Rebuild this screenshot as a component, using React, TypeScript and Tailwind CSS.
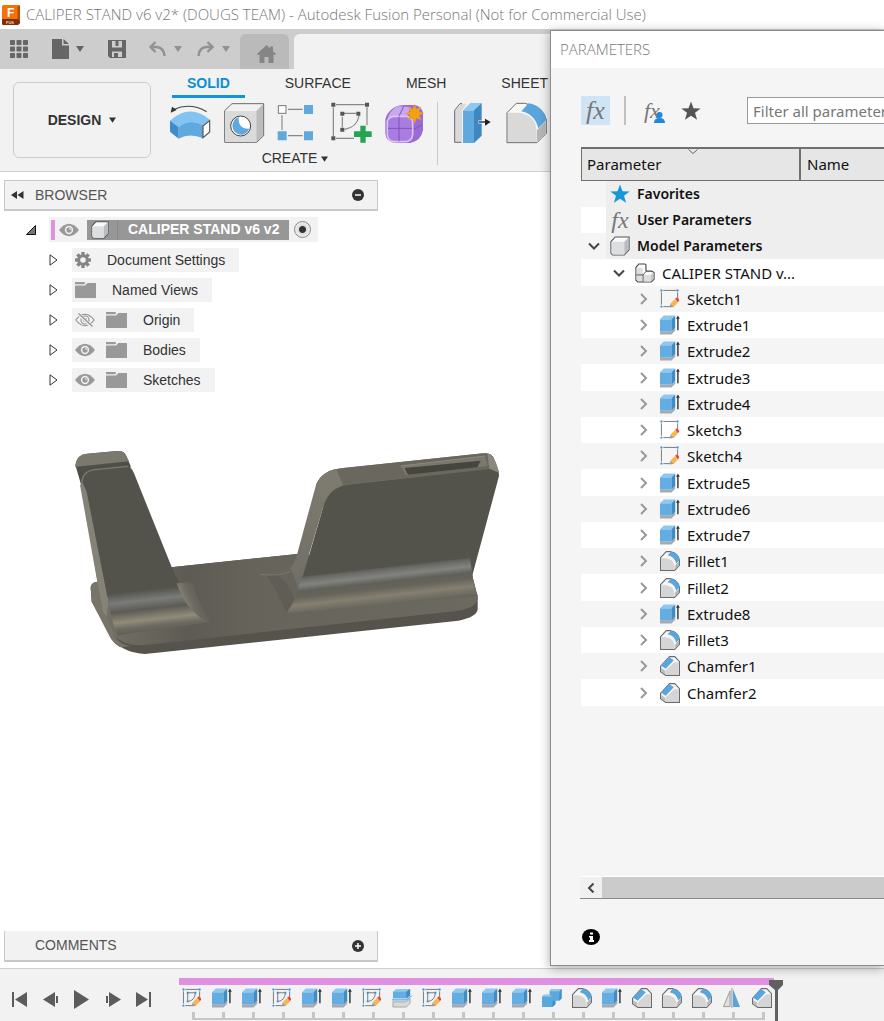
import React, { useState } from "react"
import clsx from "clsx"

type IconProps = { className?: string }

/* ---------- feature icons, shared by the tree and the timeline ---------- */

function Pencil() {
  return (
    <g transform="translate(-3 -3) scale(1.15)">
      <path d="M11.5 19.5l.8-3.6 3.2 2.9z" fill="#9a9a9a" />
      <path d="M12.3 15.6l3.9-3.7 2.9 2.9-3.7 4z" fill="#f6b84a" />
      <path d="M16.4 11.6l1.3-1.2q2.4.6 2.5 2.8l-1.2 1.4z" fill="#e8433f" />
    </g>
  )
}

function SketchIcon({ className, detailed }: IconProps & { detailed?: boolean }) {
  return (
    <svg viewBox="0 0 21 21" className={className} aria-hidden="true">
      <g fill="none" stroke="#777" strokeWidth="1">
        <path d="M3.5 1.5h14M1.5 3.5v13M3.5 18.5h7M18.5 3.5v6" />
        {detailed && <path d="M6 5v9M6 5h8M14 6q-1 7-7 8" />}
      </g>
      <g fill="#2d8fd5">
        <path d="M.5.5h2v2h-2zM17.5.5h2v2h-2zM.5 17.5h2v2h-2z" />
        {detailed && <path d="M5 4h2v2H5zM13 4h2v2h-2zM5 13h2v2H5z" />}
      </g>
      <Pencil />
    </svg>
  )
}

function ExtrudeIcon({ className }: IconProps) {
  return (
    <svg viewBox="0 0 21 21" className={className} aria-hidden="true">
      <path d="M0 17.500h12l4-4v3l-4 4H0z" fill="#a9a9a9" />
      <path d="M0 4.500h12V17.500H0z" fill="#63ade2" />
      <path d="M0 4.500L4 .5H16l-4 4z" fill="#8dc8f2" />
      <path d="M12 4.500L16 .5v13l-4 4z" fill="#3f8dc6" />
      <path d="M18.800 2v14" stroke="#333" strokeWidth="1.500" />
      <path d="M16.800 4l2-3.500 2 3.500z" fill="#333" />
    </svg>
  )
}

function FilletIcon({ className }: IconProps) {
  return (
    <svg viewBox="0 0 21 21" className={className} aria-hidden="true">
      <path d="M.6 7l6-6.400h4q9 2 9.800 9.400v5l-5 5.400H.6z" fill="#f6f6f6" stroke="#6b6b6b" strokeWidth="1.200" />
      <path d="M1.200 7.500h5.300q8 1 9 9v3.300H1.200z" fill="#d5d5d5" />
      <path d="M8 4.500L11.500.8q8 1.500 9 9L17 13.500Q15.500 6 8 4.500z" fill="#5aa5dc" />
      <path d="M16 15l4-4v4l-4 4.500z" fill="#b5b5b5" />
    </svg>
  )
}

function ChamferIcon({ className }: IconProps) {
  return (
    <svg viewBox="0 0 21 21" className={className} aria-hidden="true">
      <path d="M.6 11L10 .6h5.500l5 5.400v14.400H6l-5.400-4z" fill="#f6f6f6" stroke="#6b6b6b" strokeWidth="1.200" />
      <path d="M6 15L15 6.500h4.800v13.300H6z" fill="#d5d5d5" />
      <path d="M1 10L9.500 1l5 3.500-8.500 9z" fill="#5aa5dc" />
      <path d="M1.200 12.500L5.500 15.500v4l-4.300-3.300z" fill="#bdbdbd" />
    </svg>
  )
}

function SplitIcon({ className }: IconProps) {
  return (
    <svg viewBox="0 0 21 21" className={className} aria-hidden="true">
      <path d="M1 4l4-3h14v7l-4 3H1z" fill="#63ade2" />
      <path d="M1 4l4-3h14l-4 3z" fill="#8dc8f2" />
      <path d="M15 4l4-3v7l-4 3z" fill="#3f8dc6" />
      <path d="M0 12.500h15.500l5-4.500" fill="none" stroke="#63ade2" strokeWidth="1.200" />
      <path d="M1 14.500h14l4-3.500v5l-4 4H1z" fill="#d9d9d9" stroke="#999" strokeWidth=".8" />
    </svg>
  )
}

function CombineIcon({ className }: IconProps) {
  return (
    <svg viewBox="0 0 21 21" className={className} aria-hidden="true">
      <path d="M0 9l2-2h6V3l2-2h10.500v10L18 13.500h-4V17l-3 3H0z" fill="#5ba8df" />
      <path d="M8 3l2-2h10.500l-2 2.500H8zM0 9l2-2h6l3 2z" fill="#8dc8f2" />
      <path d="M18.500 3.500l2-2.500v10L18 13.500zM11 14l3-1v4l-3 3z" fill="#3f8dc6" />
    </svg>
  )
}

function MirrorIcon({ className }: IconProps) {
  return (
    <svg viewBox="0 0 21 21" className={className} aria-hidden="true">
      <path d="M8.500 3v16.500H1.500z" fill="#dedede" stroke="#999" />
      <path d="M11.500 1l7.500 19h-7.500z" fill="#5aa5dc" />
      <path d="M10.400 0v21" stroke="#999" strokeWidth="1" />
    </svg>
  )
}

function CubeIcon({ className }: IconProps) {
  return (
    <svg viewBox="0 0 21 21" className={className} aria-hidden="true">
      <path d="M1 6l4.500-5H20v13.500L15 20H3l-2-2z" fill="#fafafa" stroke="#555" strokeWidth="1.200" />
      <path d="M1.600 6H15v13.400H3l-1.400-1.400z" fill="#dcdfe2" />
      <path d="M15 6l4.500-4.500v13L15 19.400z" fill="#b9bcc0" />
    </svg>
  )
}

function ComponentIcon({ className }: IconProps) {
  return (
    <svg viewBox="0 0 21 21" className={className} aria-hidden="true">
      <path d="M1 4.500L4 1h6.500l1 1v6.500h6L20 10v7l-3 3H3l-2-2z" fill="#fbfbfb" stroke="#444" strokeWidth="1.200" />
      <path d="M1.600 5H8v14H3l-1.400-1.400zM9 12.500h7.500v7H9z" fill="#dedede" />
      <path d="M8.500 12v7.500M1.500 12.500h7l2.500-3" fill="none" stroke="#555" />
      <path d="M16.500 12.500l3-2.500v7l-3 2.500z" fill="#c4c4c4" />
    </svg>
  )
}

const featureIcons = {
  sketch: SketchIcon,
  extrude: ExtrudeIcon,
  fillet: FilletIcon,
  chamfer: ChamferIcon,
  split: SplitIcon,
  combine: CombineIcon,
  mirror: MirrorIcon,
}
type Feature = keyof typeof featureIcons

/* ---------- small glyphs ---------- */

function Star({ className }: IconProps) {
  return (
    <svg viewBox="0 0 20 20" className={className} aria-hidden="true">
      <path d="M10 .5l2.500 6.700 7.200.2-5.700 4.400 2.100 7L10 14.700l-6.100 4.100 2.100-7L.3 7.400l7.200-.2z" fill="currentColor" />
    </svg>
  )
}

function Caret({ className }: IconProps) {
  return (
    <svg viewBox="0 0 8 6" className={className} aria-hidden="true">
      <path d="M0 0h8L4 6z" fill="currentColor" />
    </svg>
  )
}

function Eye({ off }: { off?: boolean }) {
  return (
    <svg viewBox="0 0 20 14" className="h-[14px] w-5" aria-hidden="true">
      {off ? (
        <g fill="none" stroke="#8f8f8f" strokeWidth="1.100">
          <path d="M.8 7Q10-4.500 19.200 7 10 18.500.8 7z" />
          <circle cx="10" cy="7" r="4" />
          <circle cx="10" cy="7" r="1.500" />
          <path d="M3 .5l14 13" stroke="#f2f2f2" strokeWidth="3" />
          <path d="M3.500.5l14 13" />
        </g>
      ) : (
        <g>
          <path d="M0 7Q10-5.500 20 7 10 19.500 0 7z" fill="#999" />
          <circle cx="10" cy="7" r="3.400" fill="none" stroke="#f2f2f2" strokeWidth="1.500" />
          <path d="M10 5.500a1.500 1.500 0 0 1 1.500 1.500" fill="none" stroke="#f2f2f2" />
        </g>
      )}
    </svg>
  )
}

function Folder() {
  return (
    <svg viewBox="0 0 21 16" className="h-4 w-[21px]" aria-hidden="true">
      <path d="M0 0h9l1.500 1-1.500 1.200H0zM0 3.500h10L12.500 1H21v15H0z" fill="#999" />
    </svg>
  )
}

function Gear() {
  return (
    <svg viewBox="-8 -8 16 16" className="size-4" aria-hidden="true">
      <circle r="4.300" fill="none" stroke="#858585" strokeWidth="3" />
      {[0, 45, 90, 135, 180, 225, 270, 315].map((a) => (
        <rect key={a} x="-1.700" y="-8" width="3.400" height="3.500" fill="#858585" transform={`rotate(${a})`} />
      ))}
    </svg>
  )
}

/* ---------- top bars ---------- */

function TitleBar() {
  return (
    <header className="flex h-[29px] shrink-0 items-center gap-[6px] bg-white pl-[2px]">
      <svg viewBox="0 0 18 20" className="h-5 w-[18px]" aria-hidden="true">
        <path d="M0 1.500Q0 0 1.500 0H17l1 1v17l-2 2H1l-1-1z" fill="#f4710c" />
        <path d="M15.500 2L18 0v18l-2.500-2z" fill="#b94a07" />
        <path d="M0 14h16l2 3v1l-2 2H1l-1-1z" fill="#7e2f08" />
        <text x="5" y="11.500" fontSize="12" fontWeight="700" fill="#fff" fontFamily="Liberation Sans, sans-serif">F</text>
        <text x="4" y="18.500" fontSize="4" fontWeight="700" fill="#f3d5c0" fontFamily="Liberation Sans, sans-serif">FUS</text>
      </svg>
      <h1 className="whitespace-nowrap font-['Open_Sans',sans-serif] text-[15px] font-light text-[#777]">
        CALIPER STAND v6 v2* (DOUGS TEAM) - Autodesk Fusion Personal (Not for Commercial Use)
      </h1>
    </header>
  )
}

function QuickBar() {
  return (
    <div className="flex h-10 shrink-0 bg-[#cdcdcd] text-[#666]">
      <div className="flex w-60 items-center pl-[10px]">
        <button aria-label="Data panel">
          <svg viewBox="0 0 18 18" className="size-[18px]" fill="currentColor">
            {[0, 6.5, 13].map((y) => [0, 6.5, 13].map((x) => <rect key={`${x}${y}`} x={x} y={y} width="5" height="5" rx=".8" />))}
          </svg>
        </button>
        <button aria-label="File" className="ml-6 flex items-center gap-[7px]">
          <svg viewBox="0 0 17 20" className="h-5 w-[17px]" fill="currentColor">
            <path d="M0 0h10v6.500h7V20H0zM11.500 0L17 5h-5.500z" />
          </svg>
          <Caret className="h-[6px] w-2" />
        </button>
        <button aria-label="Save" className="ml-6">
          <svg viewBox="0 0 18 18" className="size-[18px]">
            <path d="M0 0h18v18H2l-2-2z" fill="currentColor" />
            <path d="M4 1h10v6.500H4zM4 11.500h10V17H4z" fill="#cdcdcd" />
            <path d="M7.500 1h3v5h-3zM6 13h4v5H6z" fill="currentColor" />
          </svg>
        </button>
        <button aria-label="Undo" className="ml-[23px] flex items-center gap-2 text-[#929292]">
          <svg viewBox="0 0 17 16" className="h-4 w-[17px]" fill="none" stroke="currentColor" strokeWidth="2.400">
            <path d="M6.500 1L1.500 6l5 5M2 6h6q7 1 7.500 9" />
          </svg>
          <Caret className="h-[6px] w-2" />
        </button>
        <button aria-label="Redo" className="ml-[15px] flex items-center gap-2 text-[#929292]">
          <svg viewBox="0 0 17 16" className="h-4 w-[17px]" fill="none" stroke="currentColor" strokeWidth="2.400">
            <path d="M10.500 1l5 5-5 5M15 6H9Q2 7 1.500 15" />
          </svg>
          <Caret className="h-[6px] w-2" />
        </button>
      </div>
      <button aria-label="Home" className="mt-[5px] flex w-[49px] items-center justify-center rounded-t-md bg-[#bababa] pt-[5px] pl-1 text-[#858585]">
        <svg viewBox="0 0 19 18" className="h-[18px] w-[19px]" fill="currentColor">
          <path d="M9.500 0L13 3.300V1.500h3v4.800L19 9l-1 1.200-1.500-1V18h-5v-6h-4v6h-5V9.200L1 10.200 0 9z" />
        </svg>
      </button>
      <div className="mt-[5px] ml-[5px] flex-1 rounded-tl-md bg-[#f2f2f2]" />
    </div>
  )
}

const iconCls = "h-[42px] w-[42px]"

function CreateTools() {
  return (
    <div className="flex gap-[11px]">
      <button aria-label="Bend">
        <svg viewBox="504 306 132 126" className="h-[42px] w-11">
          <path d="M520 329Q570 306 620 335" fill="none" stroke="#444" strokeWidth="3.500" />
          <path d="M512 338l4-18 14 10z" fill="#333" />
          <path d="M510 362Q570 308 631 360L609 376Q570 354 536 381z" fill="#83c3f2" />
          <path d="M510 362l26 19v35l-26-21z" fill="#3f8cc8" />
          <path d="M536 381Q570 354 609 376v39Q570 398 536 416z" fill="#5fa9df" />
          <path d="M609 378l20-16v34l-20 17z" fill="#fff" stroke="#555" strokeWidth="3.500" />
        </svg>
      </button>
      <button aria-label="Hole">
        <svg viewBox="669 306 126 126" className={iconCls}>
          <path d="M674 332l22-21h95v96l-21 20h-96z" fill="#f1f1f1" stroke="#6b6b6b" strokeWidth="3" />
          <path d="M676 333h93v93h-93z" fill="#dadada" />
          <path d="M769 333l20-20v93l-20 20z" fill="#bcbcbc" />
          <circle cx="722" cy="378" r="30" fill="#fff" stroke="#444" strokeWidth="3" />
          <path d="M716 352q-2 36 32 34-8 18-26 18-22-2-25-26 2-22 19-26z" fill="#5fa9df" />
        </svg>
      </button>
      <button aria-label="Pattern">
        <svg viewBox="48 306 129 126" className="h-[42px] w-[43px]">
          <path d="M84 328h44M66 346v44M84 407h44" stroke="#888" strokeWidth="3.500" />
          <rect x="55" y="317" width="23" height="23" fill="#fff" stroke="#777" strokeWidth="3" />
          <path d="M132 315h27v27h-27zM53 394h27v27H53zM132 394h27v27h-27z" fill="#5fa9df" />
        </svg>
      </button>
      <button aria-label="Create sketch">
        <svg viewBox="210 306 129 126" className="h-[42px] w-[43px]">
          <path d="M228 314h86M220 322v86M228 415h54M321 322v54M247 350v32M252 340h36M297 348q-6 34-43 40" fill="none" stroke="#888" strokeWidth="3.500" />
          <path d="M214 308h12v12h-12zM315 308h12v12h-12zM214 409h12v12h-12zM241 335h12v12h-12zM289 335h12v12h-12zM241 383h12v12h-12z" fill="#555" />
          <path d="M301 377h16v17h18v17h-18v17h-16v-17h-19v-17h19z" fill="#24a351" />
        </svg>
      </button>
      <button aria-label="Create form">
        <svg viewBox="372 306 126 126" className={iconCls}>
          <path d="M376 358q4-20 24-34 14-10 38-9h28q24 8 23 30v46q-6 32-38 38h-42q-30-2-33-28z" fill="#9a6bd6" />
          <path d="M384 350q10-22 28-31l40 2-10 26-56 8z" fill="#c8a8ef" />
          <path d="M382 364q4-14 20-15h38q16 2 18 16v38q-2 20-20 22h-36q-18-2-20-20z" fill="#a97ce2" stroke="#d9c4f5" strokeWidth="5" />
          <path d="M417 350v74M384 385h72M462 388l24-14M417 348l14-28" stroke="#7d53b8" strokeWidth="3" />
          <path d="M464 311l5 17 15-9-7 16 17 5-17 6 8 15-15-7-6 17-6-17-16 8 9-16-17-6 17-5-8-15 15 7z" fill="#f4a013" />
        </svg>
      </button>
    </div>
  )
}

function ModifyTools() {
  return (
    <div className="flex gap-[11px]">
      <button aria-label="Press pull">
        <svg viewBox="579 306 126 126" className={iconCls}>
          <path d="M584 332l20-21h16l-14 20v96h-22z" fill="#dadada" />
          <path d="M606 311h-6l-16 20v96h20" fill="none" stroke="#6b6b6b" strokeWidth="3" />
          <path d="M609 331h33v98h-33z" fill="#5fa9df" />
          <path d="M609 331l22-22h34l-23 22z" fill="#8dc8f2" />
          <path d="M642 331l23-22v98l-23 22z" fill="#3d87c2" />
          <path d="M655 366h22" stroke="#fff" strokeWidth="9" />
          <path d="M656 366h24" stroke="#222" strokeWidth="4" />
          <path d="M675 356l17 10-17 11z" fill="#222" />
        </svg>
      </button>
      <button aria-label="Fillet">
        <svg viewBox="738 306 126 126" className={iconCls}>
          <path d="M741 338l28-28h25q60 12 65 50v40l-28 28h-90z" fill="#f7f7f7" stroke="#6b6b6b" strokeWidth="3" />
          <path d="M744 338h30q52 4 56 55v33h-86z" fill="#d9d9d9" />
          <path d="M784 334l22-24q44 8 53 50l-24 25q-12-44-51-51z" fill="#5aa5dc" />
          <path d="M831 390l26-26v35l-26 26z" fill="#b5b5b5" />
        </svg>
      </button>
    </div>
  )
}

function Ribbon() {
  const tabs = ["SOLID", "SURFACE", "MESH", "SHEET METAL"]
  const [active, setActive] = useState("SOLID")
  return (
    <div className="flex h-[103px] shrink-0 overflow-hidden border-b border-[#cfcfcf] bg-[#f2f2f2] text-[14px] text-[#333]">
      <button className="mt-[13px] ml-[13px] flex h-[76px] w-[138px] shrink-0 items-center justify-center gap-2 rounded-md border border-[#ccc] font-bold">
        DESIGN
        <Caret className="h-[6px] w-[7px]" />
      </button>
      <div className="ml-[17px]">
        <div className="ml-1 flex gap-[25px]">
          {tabs.map((tab) => (
            <button
              key={tab}
              onClick={() => setActive(tab)}
              className={clsx(
                "h-[29px] border-b-[3px] px-[15px] pt-[3px] whitespace-nowrap",
                tab === active ? "border-[#0d96d9] font-bold text-[#0d8ed0]" : "border-transparent"
              )}
            >
              {tab}
            </button>
          ))}
        </div>
        <div className="flex pt-1">
          <div className="flex flex-col items-center">
            <CreateTools />
            <button className="flex items-center gap-1 pt-1 pr-1">
              CREATE <Caret className="h-[6px] w-[7px]" />
            </button>
          </div>
          <div className="mx-[11px] h-[63px] w-px bg-[#c8c8c8]" />
          <div className="pl-1">
            <ModifyTools />
          </div>
        </div>
      </div>
    </div>
  )
}

/* ---------- browser tree ---------- */

type Node = { name: string; eye?: "on" | "off"; icon: "gear" | "folder" }
const nodes: Node[] = [
  { name: "Document Settings", icon: "gear" },
  { name: "Named Views", icon: "folder" },
  { name: "Origin", eye: "off", icon: "folder" },
  { name: "Bodies", eye: "on", icon: "folder" },
  { name: "Sketches", eye: "on", icon: "folder" },
]

function PanelToggle({ open, label }: { open: boolean; label: string }) {
  return (
    <button aria-label={label}>
      <svg viewBox="0 0 12 12" className="size-3">
        <circle cx="6" cy="6" r="6" fill="#333" />
        <path d={open ? "M3 6h6" : "M3 6h6M6 3v6"} stroke="#fff" strokeWidth="1.500" />
      </svg>
    </button>
  )
}

function Browser() {
  return (
    <section className="text-[14px] text-[#333]">
      <div className="flex h-[31px] w-[374px] items-center border border-b-2 border-[#c8c8c8] bg-[#f2f2f2] pr-[13px] pl-[6px] text-[#555]">
        <svg viewBox="0 0 13 8" className="h-2 w-[13px]" aria-hidden="true">
          <path d="M6 0v8L0 4zM12.500 0v8l-6-4z" fill="#333" />
        </svg>
        <h2 className="ml-[11px] flex-1">BROWSER</h2>
        <PanelToggle open label="Collapse browser" />
      </div>
      <div className="mt-[6px] ml-[22px] flex h-[25px] items-center">
        <button aria-label="Collapse component">
          <svg viewBox="0 0 10 10" className="size-[10px]">
            <path d="M9.500.5v9h-9z" fill="#777" stroke="#111" />
          </svg>
        </button>
        <div className="ml-[13px] flex h-full items-center bg-[#f2f2f2] pr-[7px] pl-[2px]">
          <span className="h-5 w-1 bg-[#dd92dd]" />
          <span className="ml-1">
            <Eye />
          </span>
          <div className="ml-2 flex h-5 items-center bg-[#979797] pr-[10px] font-bold text-white">
            <span className="flex h-full w-[31px] items-center border-r border-[#8a8a8a] pl-1">
              <CubeIcon className="size-[18px]" />
            </span>
            <span className="pl-[10px] whitespace-nowrap">CALIPER STAND v6 v2</span>
          </div>
          <input
            type="radio"
            defaultChecked
            aria-label="Activate component"
            className="ml-[5px] size-[17px] appearance-none rounded-full border border-[#888] bg-[radial-gradient(circle,#333_0_3px,#ddd_4px,#f2f2f2_8px)]"
          />
        </div>
      </div>
      <ul className="mt-[6px] ml-[45px] flex flex-col gap-[6px]">
        {nodes.map((n) => (
          <li key={n.name} className="flex h-6 items-center">
            <button aria-label={`Expand ${n.name}`}>
              <svg viewBox="0 0 9 12" className="h-3 w-[9px]">
                <path d="M1 .8L8 6l-7 5.200z" fill="#fff" stroke="#333" />
              </svg>
            </button>
            <div className="ml-[14px] flex h-full items-center bg-[#f2f2f2] pr-[14px] pl-[3px]">
              {n.eye && (
                <span className="mr-[11px]">
                  <Eye off={n.eye === "off"} />
                </span>
              )}
              {n.icon === "gear" ? <Gear /> : <Folder />}
              <span className="pl-4 whitespace-nowrap">{n.name}</span>
            </div>
          </li>
        ))}
      </ul>
    </section>
  )
}

/* ---------- 3D body ---------- */

function CaliperStand() {
  return (
    <svg viewBox="0 0 1350 720" className="h-60 w-[450px]" role="img" aria-label="Caliper stand model">
      <defs>
        <linearGradient id="fillR" gradientUnits="userSpaceOnUse" x1="960" y1="408" x2="973" y2="526">
          <stop offset="0" stopColor="#53524b" />
          <stop offset=".12" stopColor="#6c6d69" />
          <stop offset=".26" stopColor="#82837f" />
          <stop offset=".42" stopColor="#60605a" />
          <stop offset=".56" stopColor="#66635a" />
          <stop offset=".76" stopColor="#857f71" />
          <stop offset="1" stopColor="#66645b" />
        </linearGradient>
        <linearGradient id="fillL" gradientUnits="userSpaceOnUse" x1="250" y1="480" x2="264" y2="608">
          <stop offset="0" stopColor="#53524b" />
          <stop offset=".24" stopColor="#7a7c7a" />
          <stop offset=".45" stopColor="#5d5b54" />
          <stop offset=".7" stopColor="#918b7b" />
          <stop offset=".85" stopColor="#6c6a60" />
          <stop offset="1" stopColor="#5f5d55" />
        </linearGradient>
        <linearGradient id="base" x1="0" y1="0" x2="1" y2="0">
          <stop offset="0" stopColor="#77756a" />
          <stop offset=".25" stopColor="#5d5b53" />
          <stop offset=".45" stopColor="#66645b" />
          <stop offset="1" stopColor="#6b6960" />
        </linearGradient>
        <linearGradient id="edge" x1="0" y1="0" x2="0" y2="1">
          <stop offset="0" stopColor="#7f7d72" />
          <stop offset="1" stopColor="#6f6d63" />
        </linearGradient>
        <linearGradient id="crease" gradientUnits="userSpaceOnUse" x1="370" y1="530" x2="425" y2="505">
          <stop offset="0" stopColor="#8c897d" />
          <stop offset=".5" stopColor="#6c6a61" />
          <stop offset="1" stopColor="#5f5d55" />
        </linearGradient>
      </defs>
      {/* plate: side wall first, then the top face */}
      <path d="M92 475Q92 458 108 456L340 411 712 372 1235 430 1253 500V538Q1250 562 1195 572L255 672Q190 668 160 630L95 515Z" fill="#55534b" />
      <path d="M92 480Q95 456 130 450L340 411 712 372 1235 430 1253 502Q1255 532 1190 543L255 645Q195 650 165 620Z" fill="url(#base)" />
      <path d="M92 470Q98 454 112 456L140 560 165 620Q180 645 215 648L180 652Q160 640 150 622L95 515Z" fill="#77756a" />

      {/* left arm */}
      <path d="M46 105Q50 73 82 71L172 63Q192 62 198 76L212 108 150 480 140 560 128 545 65 170Z" fill="#504f47" />
      <path d="M46 112Q48 73 82 71L172 63Q192 62 198 76L207 94 50 110Z" fill="#7b796d" />
      <path d="M60 165L76 150 148 500 140 562 128 545Z" fill="#858377" />
      <path d="M64 150Q68 122 104 118L195 106Q212 106 222 130L335 411 370 485 142 500 80 185Z" fill="#53524b" />
      <path d="M66 165Q64 124 104 119L205 109" fill="none" stroke="#7c7a6f" strokeWidth="4" />
      <path d="M142 494L350 466 390 530 455 576 172 616Q150 560 142 494Z" fill="url(#fillL)" />
      <path d="M350 460L397 456Q415 520 455 576L435 573Q375 535 350 460Z" fill="url(#crease)" />

      {/* right arm */}
      <path d="M768 165Q785 120 850 114L1270 70Q1290 67 1300 82L1317 125 1290 125 860 172 790 230 715 480 678 550Q670 480 640 436L598 434Q670 428 690 415 704 400 712 370Z" fill="url(#edge)" />
      <path d="M768 165Q785 120 850 114L1270 70Q1290 67 1300 82L1317 130 1290 117 865 163Q815 170 794 215Z" fill="#69675e" />
      <path d="M768 165Q785 125 828 116L850 166Q808 180 792 218Z" fill="#7d7b70" />
      <path d="M598 434Q665 430 690 415 705 440 715 480L680 550 640 438Z" fill="#66645b" />
      <path d="M650 436Q690 460 704 510L680 550Q655 490 620 437Z" fill="#5f5d55" />
      <path d="M600 433Q655 440 690 424" fill="none" stroke="#7b796f" strokeWidth="3" />
      <path d="M710 500L730 435 790 230Q808 172 862 164L1288 117Q1322 114 1316 142L1237 436 1200 460Z" fill="#53524b" />
      <path d="M725 440L1230 383 1238 440Q1240 470 1254 498L678 550Q705 520 725 440Z" fill="url(#fillR)" />
      <path d="M1282 71Q1305 74 1317 128L1288 116Z" fill="#8a887d" />
      <path d="M1022 108L1275 78 1283 108 1038 136Z" fill="#7b796e" />
      <path d="M1034 114L1262 92 1252 112 1044 134Z" fill="#45443d" />
      <path d="M1022 108L1275 78" stroke="#8b897e" strokeWidth="3" />
    </svg>
  )
}

/* ---------- parameters dialog ---------- */

const params: { name: string; kind: Feature }[] = [
  { name: "Sketch1", kind: "sketch" },
  { name: "Extrude1", kind: "extrude" },
  { name: "Extrude2", kind: "extrude" },
  { name: "Extrude3", kind: "extrude" },
  { name: "Extrude4", kind: "extrude" },
  { name: "Sketch3", kind: "sketch" },
  { name: "Sketch4", kind: "sketch" },
  { name: "Extrude5", kind: "extrude" },
  { name: "Extrude6", kind: "extrude" },
  { name: "Extrude7", kind: "extrude" },
  { name: "Fillet1", kind: "fillet" },
  { name: "Fillet2", kind: "fillet" },
  { name: "Extrude8", kind: "extrude" },
  { name: "Fillet3", kind: "fillet" },
  { name: "Chamfer1", kind: "chamfer" },
  { name: "Chamfer2", kind: "chamfer" },
]

function Fx({ className }: IconProps) {
  return <span className={clsx("font-['Liberation_Serif',serif] italic text-[#777]", className)}>fx</span>
}

function Chevron({ open }: { open?: boolean }) {
  return (
    <svg viewBox="0 0 12 12" className="size-3 shrink-0" fill="none" strokeWidth="2" aria-hidden="true">
      {open ? <path d="M1 3.500l5 5 5-5" stroke="#444" /> : <path d="M3 1l5 5-5 5" stroke="#999" />}
    </svg>
  )
}

const rowCls = "h-[26px] nth-[4n]:h-[27px] odd:bg-[#f5f5f5] even:bg-white"

function GroupRow({ icon, name, open }: { icon: React.ReactNode; name: string; open?: boolean }) {
  return (
    <tr className={rowCls}>
      <td colSpan={2} className="p-0">
        <div className="flex h-[26px] items-center">
          <span className="flex w-[25px] justify-center">{open && <Chevron open />}</span>
          <span className="flex h-full flex-1 items-center gap-[7px] bg-[#eee] pl-1 text-[14px] font-semibold">
            <span className="flex w-5 justify-center">{icon}</span>
            {name}
          </span>
        </div>
      </td>
    </tr>
  )
}

function ParameterTable() {
  return (
    <table className="w-full border-separate border-spacing-0 text-left text-[15px] text-[#111]">
      <thead>
        <tr className="h-[34px] bg-[#e6e6e6]">
          <th className="relative w-[220px] border border-t-2 border-r-2 border-[#707070] px-[5px] font-normal">
            Parameter
            <svg viewBox="0 0 10 5" className="absolute top-0 left-[106px] h-[5px] w-[10px]" fill="none" stroke="#666" aria-hidden="true">
              <path d="M.5.500l4.500 4 4.500-4" />
            </svg>
          </th>
          <th className="border-t-2 border-b border-[#707070] px-[6px] font-normal">Name</th>
        </tr>
      </thead>
      <tbody className="leading-5">
        <GroupRow name="Favorites" icon={<Star className="size-5 text-[#1499d6]" />} />
        <GroupRow name="User Parameters" icon={<Fx className="text-[24px] leading-5 font-normal" />} />
        <GroupRow name="Model Parameters" icon={<CubeIcon className="size-5" />} open />
        <tr className={rowCls}>
          <td colSpan={2} className="p-0">
            <div className="flex items-center pl-8">
              <Chevron open />
              <ComponentIcon className="ml-[10px] size-5" />
              <span className="ml-[7px]">CALIPER STAND v...</span>
            </div>
          </td>
        </tr>
        {params.map((p) => {
          const Icon = featureIcons[p.kind]
          return (
            <tr key={p.name} className={rowCls}>
              <td colSpan={2} className="p-0">
                <div className="flex items-center pl-[57px]">
                  <Chevron />
                  <Icon className="ml-[10px] size-5" />
                  <span className="ml-[7px]">{p.name}</span>
                </div>
              </td>
            </tr>
          )
        })}
      </tbody>
    </table>
  )
}

function ParametersDialog() {
  const [filter, setFilter] = useState("")
  return (
    <section
      role="dialog"
      aria-label="Parameters"
      className="absolute top-[30px] right-0 bottom-[55px] left-[550px] flex flex-col overflow-hidden border border-r-0 border-[#8c8c8c] bg-[#f5f5f5] font-['Noto_Sans',sans-serif] shadow-[0_2px_10px_rgba(0,0,0,0.35)]"
    >
      <h2 className="flex h-[37px] shrink-0 items-center bg-white pl-[9px] font-['Open_Sans',sans-serif] text-[15px] font-light text-[#777]">
        PARAMETERS
      </h2>
      <div className="mt-7 flex h-[29px] shrink-0 items-center pl-[30px]">
        <button aria-label="Show all parameters" className="flex size-[29px] items-center justify-center bg-[#cfe4f4]">
          <Fx className="text-[26px] leading-6" />
        </button>
        <span className="ml-[14px] h-full w-[2px] bg-[#c0c0c0]" />
        <button aria-label="User parameters" className="ml-[18px] flex items-end">
          <Fx className="text-[22px] leading-6" />
          <svg viewBox="0 0 11 11" className="-ml-[6px] h-[11px] w-[11px]" fill="#1e88dd">
            <circle cx="5.500" cy="3" r="3" />
            <path d="M0 11q0-5 5.500-5t5.500 5z" />
          </svg>
        </button>
        <button aria-label="Favorites" className="ml-4">
          <Star className="size-5 text-[#555]" />
        </button>
        <input
          type="text"
          aria-label="Filter parameters"
          placeholder="Filter all parameters"
          value={filter}
          onChange={(e) => setFilter(e.target.value)}
          className="ml-auto h-[27px] w-[137px] border border-r-0 border-[#999] bg-white pl-[5px] text-[15px] placeholder:text-[#777]"
        />
      </div>
      <div className="mt-[22px] flex-1 overflow-hidden pl-[30px]">
        <ParameterTable />
      </div>
      <div className="ml-[29px] flex h-[23px] shrink-0 border-t border-b border-t-white border-b-[#888]">
        <button aria-label="Scroll left" className="flex w-[22px] items-center justify-center bg-[#f0f0f0]">
          <svg viewBox="0 0 8 10" className="h-[10px] w-2" fill="none" stroke="#444" strokeWidth="2">
            <path d="M6.500.5L2 5l4.500 4.500" />
          </svg>
        </button>
        <span className="flex-1 bg-[#cbcbcb]" />
      </div>
      <div className="flex h-[66px] shrink-0 pt-[29px] pl-[31px]">
        <button aria-label="Information" className="size-[18px]">
          <svg viewBox="0 0 18 18" className="size-[18px]">
            <ellipse cx="9" cy="9" rx="9" ry="8" fill="#000" />
            <path d="M8 4.500h3v2H8zM7 8h4v4h1v2H7v-2h1V9.500H7z" fill="#fff" />
          </svg>
        </button>
      </div>
    </section>
  )
}

/* ---------- timeline ---------- */

const timeline: Feature[] = [
  "sketch", "extrude", "extrude", "sketch", "extrude", "extrude", "sketch", "split", "sketch", "extrude",
  "extrude", "extrude", "combine", "fillet", "extrude", "chamfer", "fillet", "fillet", "mirror", "chamfer",
]

const transport = [
  { label: "Go to start", d: "M0 0h2v15H0zM15 0v15L3 7.500z" },
  { label: "Step back", d: "M12 0v15L0 7.500zM13 4h2v7h-2z" },
  { label: "Play", d: "M0-2l15 9.500L0 17z" },
  { label: "Step forward", d: "M4 0v15l12-7.500zM1 4h2v7H1z" },
  { label: "Go to end", d: "M13 0h2v15h-2zM0 0v15l12-7.500z" },
]

function Timeline() {
  return (
    <footer className="flex h-[53px] shrink-0 border-t border-[#cfcfcf] bg-[#f2f2f2]">
      <div className="flex h-full w-[179px] shrink-0 items-center gap-4 pt-2 pl-3">
        {transport.map((t) => (
          <button key={t.label} aria-label={t.label}>
            <svg viewBox="0 0 15 15" className="size-[15px] overflow-visible" fill="#5c5c5c">
              <path d={t.d} />
            </svg>
          </button>
        ))}
      </div>
      <div className="pt-[9px]">
        <div className="mr-[5px] h-[7px] bg-[#e090e0]" />
        <ol className="flex pt-[3px]">
          {timeline.map((kind, i) => {
            const Icon = featureIcons[kind]
            return (
              <li key={i} className="w-[30px]">
                <button aria-label={kind} className="block pl-[3px]">
                  {kind === "sketch" ? <SketchIcon detailed className="size-5" /> : <Icon className="size-5" />}
                </button>
                <div
                  className={clsx(
                    "mt-1 ml-[13px] h-2 border-b-2 border-[#c6c6c6]",
                    i < timeline.length - 1 ? "w-[30px]" : "w-[3px]"
                  )}
                >
                  <div className="h-full w-[3px] bg-[#c6c6c6]" />
                </div>
              </li>
            )
          })}
        </ol>
      </div>
      <svg viewBox="0 0 14 42" className="-ml-[10px] mt-[11px] h-[42px] w-[14px]" aria-hidden="true">
        <path d="M0 0h14v5l-5 5v32H6V10L0 5z" fill="#606060" />
      </svg>
    </footer>
  )
}

export default function App() {
  return (
    <div className="relative flex h-screen min-h-[900px] w-full flex-col overflow-hidden bg-white font-['Liberation_Sans',Arial,sans-serif]">
      <TitleBar />
      <QuickBar />
      <Ribbon />
      <main className="flex flex-1 flex-col px-1 pt-2">
        <Browser />
        <div className="mt-[38px] ml-14">
          <CaliperStand />
        </div>
        <div className="mt-auto mb-[6px] flex h-[31px] w-[374px] items-center border border-t-0 border-b-2 border-[#c8c8c8] bg-[#f2f2f2] pr-[13px] pl-[30px] text-[14px] text-[#555]">
          <h2 className="flex-1">COMMENTS</h2>
          <PanelToggle open={false} label="Expand comments" />
        </div>
      </main>
      <Timeline />
      <ParametersDialog />
    </div>
  )
}
